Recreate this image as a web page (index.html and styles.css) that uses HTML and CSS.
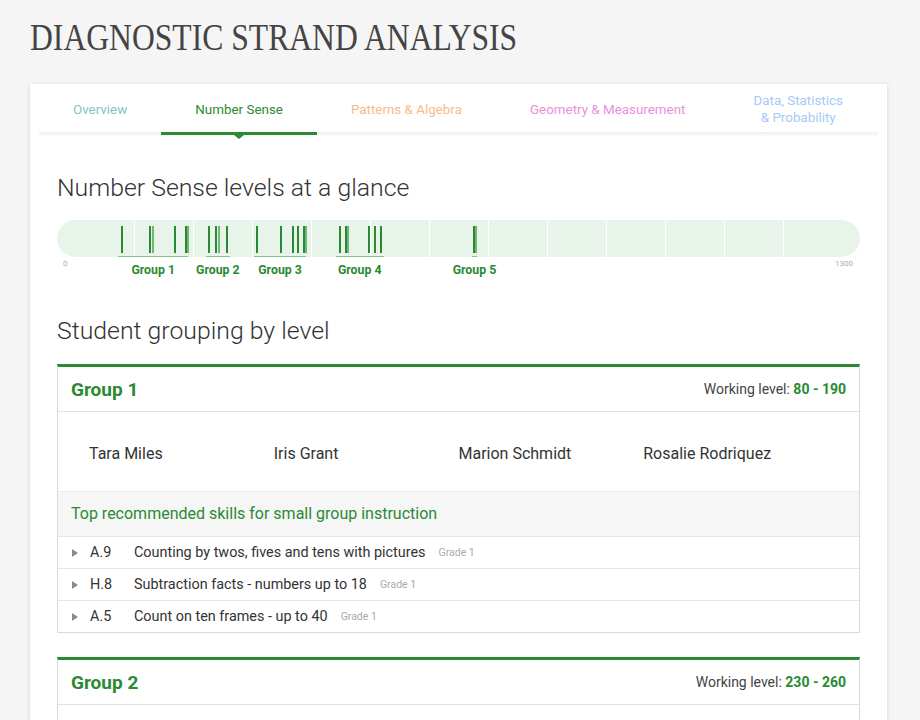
FILE: index.html
```html
<!DOCTYPE html>
<html>
<head>
<meta charset="utf-8">
<title>Diagnostic Strand Analysis</title>
<link rel="stylesheet" href="styles.css">
</head>
<body>
<div class="page">
	<div class="title-wrap">
		<h1 class="title">DIAGNOSTIC STRAND ANALYSIS</h1>
	</div>

	<div class="card">
		<div class="tabs">
			<div class="tab tab-overview">Overview</div>
			<div class="tab tab-number active">Number Sense</div>
			<div class="tab tab-patterns">Patterns &amp; Algebra</div>
			<div class="tab tab-geometry">Geometry &amp; Measurement</div>
			<div class="tab tab-data">Data, Statistics<br>&amp; Probability</div>
		</div>
		<div class="tabs-edge"></div>

		<div class="content">
			<h2 class="heading">Number Sense levels at a glance</h2>

			<div class="chart">
				<div class="bar">
					<div class="track">
						<div class="seg"></div><div class="seg"></div><div class="seg"></div><div class="seg"></div>
						<div class="seg"></div><div class="seg"></div><div class="seg"></div><div class="seg"></div>
						<div class="seg"></div><div class="seg"></div><div class="seg"></div><div class="seg"></div>
						<div class="seg"></div>

						<span class="tick" style="left:5.95%"></span>
						<span class="tick" style="left:9.69%"></span>
						<span class="tick light" style="left:10.0%"></span>
						<span class="tick" style="left:12.85%"></span>
						<span class="tick" style="left:14.31%"></span>
						<span class="tick light" style="left:14.55%"></span>
						<span class="range" style="left:5.62%;width:9.15%"></span>

						<span class="tick" style="left:17.38%"></span>
						<span class="tick" style="left:18.31%"></span>
						<span class="tick light" style="left:18.6%"></span>
						<span class="tick" style="left:19.69%"></span>
						<span class="range" style="left:17.08%;width:3.08%"></span>

						<span class="tick" style="left:23.62%"></span>
						<span class="tick" style="left:26.77%"></span>
						<span class="tick" style="left:28.23%"></span>
						<span class="tick" style="left:29.0%"></span>
						<span class="tick" style="left:29.77%"></span>
						<span class="tick light" style="left:30.05%"></span>
						<span class="range" style="left:23.38%;width:6.69%"></span>

						<span class="tick" style="left:34.46%"></span>
						<span class="tick" style="left:35.23%"></span>
						<span class="tick light" style="left:35.5%"></span>
						<span class="tick" style="left:38.23%"></span>
						<span class="tick" style="left:38.92%"></span>
						<span class="tick" style="left:39.77%"></span>
						<span class="range" style="left:34.0%;width:6.23%"></span>

						<span class="tick" style="left:51.92%"></span>
						<span class="tick light" style="left:52.2%"></span>
						<span class="range" style="left:51.77%;width:0.62%"></span>
					</div>
				</div>
				<span class="axis axis-min">0</span>
				<span class="axis axis-max">1300</span>
				<div class="group-labels">
					<span class="group-label" style="left:10.19%">Group 1</span>
					<span class="group-label" style="left:18.62%">Group 2</span>
					<span class="group-label" style="left:26.73%">Group 3</span>
					<span class="group-label" style="left:37.12%">Group 4</span>
					<span class="group-label" style="left:52.08%">Group 5</span>
				</div>
			</div>

			<h2 class="heading heading-groups">Student grouping by level</h2>

			<div class="group">
				<div class="group-head">
					<div class="group-name">Group 1</div>
					<div class="level">Working level: <b>80 - 190</b></div>
				</div>
				<div class="students">
					<div class="student">Tara Miles</div>
					<div class="student">Iris Grant</div>
					<div class="student">Marion Schmidt</div>
					<div class="student">Rosalie Rodriquez</div>
				</div>
				<div class="skills-head">Top recommended skills for small group instruction</div>
				<div class="skill">
					<span class="arrow"></span>
					<span class="code">A.9</span>
					<span class="skill-name">Counting by twos, fives and tens with pictures</span>
					<span class="grade">Grade 1</span>
				</div>
				<div class="skill">
					<span class="arrow"></span>
					<span class="code">H.8</span>
					<span class="skill-name">Subtraction facts - numbers up to 18</span>
					<span class="grade">Grade 1</span>
				</div>
				<div class="skill">
					<span class="arrow"></span>
					<span class="code">A.5</span>
					<span class="skill-name">Count on ten frames - up to 40</span>
					<span class="grade">Grade 1</span>
				</div>
			</div>

			<div class="group">
				<div class="group-head">
					<div class="group-name">Group 2</div>
					<div class="level">Working level: <b>230 - 260</b></div>
				</div>
				<div class="students">
					<div class="student">&nbsp;</div>
				</div>
			</div>
		</div>
	</div>
</div>
</body>
</html>
```

FILE: styles.css
```css
body{
	margin:0;
	background:#f5f5f5;
	font-family:Roboto, "Noto Sans", sans-serif;
	color:#333;
}
.page{
	padding:0 33px 0 30px;
}
.title-wrap{
	height:84px;
	padding-top:19px;
	box-sizing:border-box;
}
.title{
	margin:0;
	font-family:"Liberation Serif", serif;
	font-weight:normal;
	font-size:37px;
	line-height:38px;
	color:#444;
	white-space:nowrap;
	transform:scaleX(0.855);
	transform-origin:0 0;
}
.card{
	background:#fff;
	box-shadow:0 1px 4px rgba(0,0,0,0.14);
	padding-bottom:40px;
}

/* tabs */
.tabs{
	display:flex;
	margin:0 9px;
	height:48px;
}
.tab{
	position:relative;
	display:flex;
	align-items:center;
	justify-content:center;
	padding:2px 34px 0;
	font-size:13.4px;
	line-height:17px;
	text-align:center;
	white-space:nowrap;
}
.tab-overview{ color:#84c3c8; }
.tab-number{ color:#2a8a32; }
.tab-patterns{ color:#f7bb8b; }
.tab-geometry{ color:#ec8fda; }
.tab-data{ color:#a4cbf5; }
.tab.active:after{
	content:"";
	position:absolute;
	left:0;
	right:0;
	bottom:-3px;
	height:3px;
	background:#2a8a32;
	z-index:2;
}
.tab.active:before{
	content:"";
	position:absolute;
	left:50%;
	bottom:-7px;
	margin-left:-5px;
	border-top:4px solid #2a8a32;
	border-left:5px solid transparent;
	border-right:5px solid transparent;
	z-index:2;
}
.tabs-edge{
	margin:0 9px;
	height:4px;
	background:linear-gradient(#f1f1f1, #fafafa);
}

.content{
	padding:0 27px;
}
.heading{
	margin:38px 0 0;
	font-size:24.8px;
	font-weight:300;
	line-height:28px;
	color:#333;
}

/* chart */
.chart{
	position:relative;
	margin-top:18px;
}
.bar{
	height:37px;
	padding:0 18px;
	border-radius:19px;
	background:#e8f4e9;
}
.track{
	position:relative;
	height:100%;
	display:grid;
	grid-template-columns:repeat(13, 1fr);
}
.seg{
	border-left:1px solid #fff;
}
.seg:first-child{
	border-left:0;
}
.tick{
	position:absolute;
	top:6px;
	width:2px;
	height:27px;
	background:#2a8a32;
}
.tick.light{
	background:#6fb874;
}
.range{
	position:absolute;
	bottom:0;
	height:1px;
	background:#86c38b;
}
.axis{
	position:absolute;
	top:39px;
	font-size:8px;
	color:#aaa;
}
.axis-min{ left:6px; }
.axis-max{ right:7px; }
.group-labels{
	position:relative;
	margin:0 18px;
	height:25px;
}
.group-label{
	position:absolute;
	top:6px;
	transform:translateX(-50%);
	font-size:12.3px;
	font-weight:bold;
	color:#2a8a32;
	white-space:nowrap;
}
.heading-groups{
	margin-top:35px;
}

/* groups */
.group{
	margin-top:19px;
	border:1px solid #d9d9d9;
	border-top:3px solid #2a8a32;
}
.group + .group{
	margin-top:24px;
}
.group-head{
	display:flex;
	justify-content:space-between;
	align-items:center;
	height:44px;
	padding:0 13px;
	border-bottom:1px solid #e2e2e2;
}
.group-name{
	font-size:19px;
	font-weight:bold;
	color:#2a8a32;
}
.level{
	font-size:14px;
	color:#444;
}
.level b{
	color:#2a8a32;
}
.students{
	display:flex;
	align-items:center;
	height:76px;
	padding:3px 31px 0;
	border-bottom:1px solid #ececec;
}
.student{
	width:185px;
	font-size:16px;
	color:#333;
}
.skills-head{
	height:44px;
	line-height:44px;
	padding:0 13px;
	background:#f6f6f6;
	border-bottom:1px solid #e6e6e6;
	font-size:16px;
	color:#2a8a32;
}
.skill{
	display:flex;
	align-items:center;
	height:31px;
	padding:0 14px;
	border-bottom:1px solid #e6e6e6;
	font-size:14.4px;
	color:#333;
}
.skill:last-child{
	border-bottom:0;
}
.arrow{
	width:0;
	height:0;
	border-left:6px solid #8a8a8a;
	border-top:4.5px solid transparent;
	border-bottom:4.5px solid transparent;
	margin-right:12px;
}
.code{
	width:44px;
}
.grade{
	margin-left:13px;
	font-size:10.5px;
	color:#aaa;
}
```
